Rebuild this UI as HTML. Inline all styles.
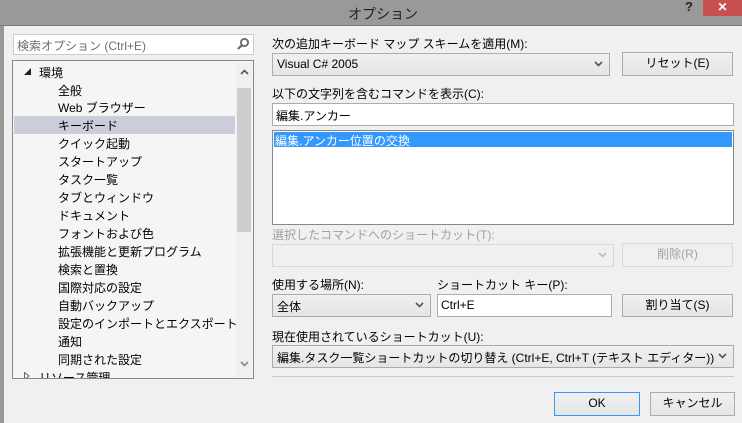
<!DOCTYPE html>
<html><head><meta charset="utf-8"><style>
*{box-sizing:border-box;margin:0;padding:0}
body{width:742px;height:423px;overflow:hidden;background:#f0f0f0;font-family:"Liberation Sans","Noto Sans CJK JP",sans-serif;font-size:12px;color:#000;position:relative}
.a{position:absolute;white-space:nowrap}
.box{position:absolute;border:1px solid #abadb3;background:#fff}
.cb{position:absolute;border:1px solid #acacac;background:linear-gradient(#f0f0f0,#e5e5e5)}
.btn{position:absolute;border:1px solid #acacac;background:linear-gradient(#f0f0f0,#e5e5e5);text-align:center;line-height:21px}
.arr{position:absolute;right:6px;top:7px}
.t{position:absolute;left:45px;white-space:nowrap}
</style></head><body>
<div class="a" style="left:0;top:0;width:742px;height:26px;background:#999;border-bottom:1px solid #7a7a7a"></div>
<div class="a" style="left:348px;top:4px;font-size:14px;color:#222">オプション</div>
<div class="a" style="left:685px;top:-1px;font-size:13px;font-weight:bold;color:#222">?</div>
<div class="a" style="left:703px;top:0;width:39px;height:16px;background:#c75050;color:#fff;text-align:center;font-size:12px;line-height:15px;font-weight:bold">✕</div>
<div class="a" style="left:0;top:26px;width:4px;height:397px;background:#999"></div>

<div class="box" style="left:13px;top:34px;width:241px;height:21px;border-color:#ccc"></div>
<div class="a" style="left:17px;top:37px;color:#6d6d6d">検索オプション (Ctrl+E)</div>
<svg class="a" style="left:236px;top:37px" width="14" height="14"><circle cx="8.5" cy="5.5" r="3.6" fill="none" stroke="#666" stroke-width="1.8"/><line x1="6" y1="8" x2="2" y2="12" stroke="#666" stroke-width="2.2"/></svg>

<div class="box" style="left:12px;top:60px;width:242px;height:319px;border-color:#828790;background:#f5f5f5;overflow:hidden">
 <div class="a" style="left:223px;top:2px;width:16px;height:314px;background:#f0f0f0"></div>
 <div class="a" style="left:224px;top:27px;width:14px;height:144px;background:#cdcdcd"></div>
 <svg class="a" style="left:227px;top:8px" width="9" height="6"><path d="M1 5 L4.5 1.5 L8 5" fill="none" stroke="#555" stroke-width="1.6"/></svg>
 <svg class="a" style="left:227px;top:300px" width="9" height="6"><path d="M1 1 L4.5 4.5 L8 1" fill="none" stroke="#888" stroke-width="1.6"/></svg>
 <div class="a" style="left:1px;top:55px;width:221px;height:18px;background:#cbcdda"></div>
 <svg class="a" style="left:11px;top:7px" width="7" height="7"><path d="M7 0 L7 7 L0 7Z" fill="#222"/></svg>
 <div class="t" style="left:26px;top:3px">環境</div>
 <div class="t" style="top:21px">全般</div>
 <div class="t" style="top:38px">Web ブラウザー</div>
 <div class="t" style="top:56px">キーボード</div>
 <div class="t" style="top:74px">クイック起動</div>
 <div class="t" style="top:92px">スタートアップ</div>
 <div class="t" style="top:110px">タスク一覧</div>
 <div class="t" style="top:128px">タブとウィンドウ</div>
 <div class="t" style="top:146px">ドキュメント</div>
 <div class="t" style="top:164px">フォントおよび色</div>
 <div class="t" style="top:182px">拡張機能と更新プログラム</div>
 <div class="t" style="top:200px">検索と置換</div>
 <div class="t" style="top:218px">国際対応の設定</div>
 <div class="t" style="top:236px">自動バックアップ</div>
 <div class="t" style="top:254px">設定のインポートとエクスポート</div>
 <div class="t" style="top:272px">通知</div>
 <div class="t" style="top:290px">同期された設定</div>
 <svg class="a" style="left:11px;top:311px" width="6" height="8"><path d="M0.5 0.5 L5 4 L0.5 7.5Z" fill="none" stroke="#666"/></svg>
 <div class="t" style="left:26px;top:308px">リソース管理</div>
</div>

<div class="a" style="left:272px;top:35px">次の追加キーボード マップ スキームを適用(M):</div>
<div class="cb" style="left:272px;top:53px;width:338px;height:23px"><span class="a" style="left:4px;top:3px">Visual C# 2005</span><svg class="arr" width="9" height="6"><path d="M1 1 L4.5 4.5 L8 1" fill="none" stroke="#555" stroke-width="1.6"/></svg></div>
<div class="btn" style="left:622px;top:52px;width:111px;height:24px">リセット(E)</div>

<div class="a" style="left:272px;top:85px">以下の文字列を含むコマンドを表示(C):</div>
<div class="box" style="left:272px;top:103px;width:462px;height:23px"><span class="a" style="left:3px;top:3px">編集.アンカー</span></div>
<div class="box" style="left:272px;top:130px;width:462px;height:95px;border-color:#828790">
 <div class="a" style="left:1px;top:1px;width:458px;height:15px;background:#3399ff"></div>
 <span class="a" style="left:2px;top:1px;color:#fff">編集.アンカー位置の交換</span>
</div>

<div class="a" style="left:272px;top:226px;color:#a0a0a0">選択したコマンドへのショートカット(T):</div>
<div class="a" style="left:272px;top:244px;width:342px;height:23px;border:1px solid #d9d9d9;background:#f0f0f0"><svg class="arr" width="9" height="6"><path d="M1 1 L4.5 4.5 L8 1" fill="none" stroke="#bbb" stroke-width="1.6"/></svg></div>
<div class="btn" style="left:622px;top:243px;width:111px;height:24px;border-color:#d9d9d9;background:#f0f0f0;color:#a0a0a0">削除(R)</div>

<div class="a" style="left:272px;top:276px">使用する場所(N):</div>
<div class="a" style="left:437px;top:276px">ショートカット キー(P):</div>
<div class="cb" style="left:272px;top:294px;width:159px;height:23px"><span class="a" style="left:4px;top:3px">全体</span><svg class="arr" width="9" height="6"><path d="M1 1 L4.5 4.5 L8 1" fill="none" stroke="#555" stroke-width="1.6"/></svg></div>
<div class="box" style="left:437px;top:294px;width:175px;height:23px"><span class="a" style="left:3px;top:3px">Ctrl+E</span></div>
<div class="btn" style="left:622px;top:294px;width:111px;height:23px">割り当て(S)</div>

<div class="a" style="left:272px;top:328px">現在使用されているショートカット(U):</div>
<div class="cb" style="left:272px;top:345px;width:462px;height:23px"><span class="a" style="left:4px;top:3px">編集.タスク一覧ショートカットの切り替え (Ctrl+E, Ctrl+T (テキスト エディター))</span><svg class="arr" width="9" height="6"><path d="M1 1 L4.5 4.5 L8 1" fill="none" stroke="#555" stroke-width="1.6"/></svg></div>
<div class="a" style="left:272px;top:376px;width:462px;height:1px;background:#c8c8c8"></div>

<div class="btn" style="left:554px;top:392px;width:86px;height:24px;border-color:#3399ff">OK</div>
<div class="btn" style="left:650px;top:392px;width:85px;height:24px">キャンセル</div>
</body></html>
